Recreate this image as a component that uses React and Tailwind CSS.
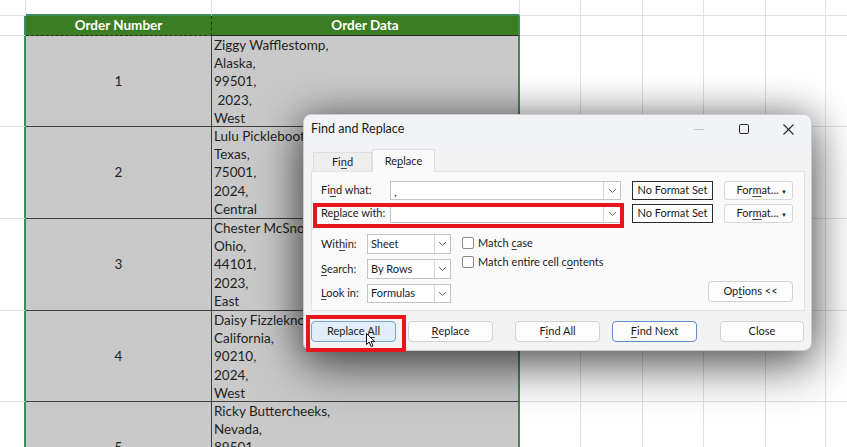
import React from "react";

const GREEN = "border-r-[#3d8c5c]";
const rightCols = ["w-[61px]", "w-[62px]", "w-[61px]", "w-[62px]", "w-[60px]", "w-[62px]"];

function RightCells() {
  return rightCols.map((w, i) => (
    <div key={i} className={`${w} shrink-0 h-full border-r border-b border-[#e1e1e1]`} />
  ));
}

const rows = [
  { n: "1", h: "h-[91px]", lines: ["Ziggy Wafflestomp,", "Alaska,", "99501,", " 2023,", "West"] },
  { n: "2", h: "h-[92px]", lines: ["Lulu Pickleboots,", "Texas,", "75001,", "2024,", "Central"] },
  { n: "3", h: "h-[92px]", lines: ["Chester McSnorkel,", "Ohio,", "44101,", "2023,", "East"] },
  { n: "4", h: "h-[91px]", lines: ["Daisy Fizzleknots,", "California,", "90210,", "2024,", "West"] },
  { n: "5", h: "h-[92px]", lines: ["Ricky Buttercheeks,", "Nevada,", "89501,", "2023,", "West"] },
];

function Chevron() {
  return (
    <svg width="9" height="6" viewBox="0 0 9 6" fill="none">
      <path d="M1 1l3.5 3.5L8 1" stroke="#6b6b6b" strokeWidth="1" />
    </svg>
  );
}

function ComboInput({ w, value }) {
  return (
    <div className={`${w} h-full flex bg-white border border-[#c4c4c4]`}>
      <div className="flex-1 pl-[3px] flex items-end pb-[1px] leading-none text-[12px]">{value}</div>
      <div className="w-[17px] border-l border-[#d6d6d6] flex items-center justify-center">
        <Chevron />
      </div>
    </div>
  );
}

function Select({ value }) {
  return (
    <div className="w-[84px] h-full flex bg-white border border-[#c4c4c4]">
      <div className="flex-1 pl-[3px] flex items-center">{value}</div>
      <div className="w-[16px] border-l border-[#d6d6d6] flex items-center justify-center">
        <Chevron />
      </div>
    </div>
  );
}

function U({ children }) {
  return <span className="underline underline-offset-2 decoration-[#444]">{children}</span>;
}

function Btn({ w, children, kind }) {
  const cls =
    kind === "primary"
      ? "bg-[#e1edf8] border-[#77a6d8]"
      : kind === "focus"
      ? "bg-[#fdfdfd] border-[#5d8fd0]"
      : "bg-[#fdfdfd] border-[#d2d2d2]";
  return (
    <div className={`${w} h-[21px] rounded-[4px] border ${cls} flex items-center justify-center shrink-0 whitespace-pre`}>
      {children}
    </div>
  );
}

function Dialog() {
  return (
    <div className="absolute left-[303px] top-[114px] w-[509px] h-[237px] rounded-[8px] bg-[#f3f3f3] border border-[#cccccc] shadow-[0_0_36px_rgba(0,0,0,0.35),0_16px_50px_rgba(0,0,0,0.55)] flex flex-col text-[11px] text-[#1b1b1b] font-['Lato',sans-serif]">
      {/* title bar */}
      <div className="h-[34px] flex items-center pl-[7px] pb-[6px] rounded-t-[8px] bg-[#f1f3f6]">
        <span className="text-[12.5px] text-[#1a1a1a]">Find and Replace</span>
        <div className="ml-auto flex items-center h-full">
          <div className="w-[45px] flex justify-center">
            <div className="w-[10px] h-px bg-[#c8c8c8]" />
          </div>
          <div className="w-[45px] flex justify-center">
            <div className="w-[10px] h-[10px] border border-[#2b2b2b] rounded-[2px]" />
          </div>
          <div className="w-[45px] flex justify-center">
            <svg width="11" height="11" viewBox="0 0 11 11">
              <path d="M0.5 0.5l10 10M10.5 0.5l-10 10" stroke="#2b2b2b" strokeWidth="1.1" />
            </svg>
          </div>
        </div>
      </div>
      {/* tabs */}
      <div className="h-[22px] flex items-end pl-[9px]">
        <div className="w-[59px] h-[19px] bg-[#eeeeee] border border-b-0 border-[#dedede] flex items-center justify-center">
          Fi<U>n</U>d
        </div>
        <div className="relative z-10 -mb-px w-[63px] h-[23px] bg-[#fafafa] border border-b-0 border-[#dedede] flex items-center justify-center">
          Re<U>p</U>lace
        </div>
      </div>
      {/* panel */}
      <div className="ml-[7px] w-[494px] h-[140px] bg-[#fafafa] border border-[#e2e2e2] pt-[9px] pl-[9px] flex flex-col">
        <div className="h-[19px] flex items-center">
          <div className="w-[69px]">
            Fi<U>n</U>d what:
          </div>
          <ComboInput w="w-[231px]" value="," />
          <div className="ml-[11px] w-[81px] h-full border border-[#2b2b2b] bg-white flex items-center justify-center">
            No Format Set
          </div>
          <div className="ml-[11px] w-[69px] h-full rounded-[3px] border border-[#d8d8d8] bg-[#fdfdfd] flex items-center justify-center relative">
            <span className="pr-[2px]">
              For<U>m</U>at...
            </span>
            <span className="absolute right-[5px] text-[6px] top-[5px]">▼</span>
          </div>
        </div>
        <div className="mt-[4px] h-[19px] flex items-center">
          <div className="w-[69px]">
            Re<U>p</U>lace with:
          </div>
          <ComboInput w="w-[231px]" value="" />
          <div className="ml-[11px] w-[81px] h-full border border-[#2b2b2b] bg-white flex items-center justify-center">
            No Format Set
          </div>
          <div className="ml-[11px] w-[69px] h-full rounded-[3px] border border-[#d8d8d8] bg-[#fdfdfd] flex items-center justify-center relative">
            <span className="pr-[2px]">
              For<U>m</U>at...
            </span>
            <span className="absolute right-[5px] text-[6px] top-[5px]">▼</span>
          </div>
        </div>
        <div className="mt-[11px] flex">
          <div className="flex flex-col gap-[5px]">
            <div className="h-[20px] flex items-center">
              <div className="w-[46px]">
                Wit<U>h</U>in:
              </div>
              <Select value="Sheet" />
            </div>
            <div className="h-[20px] flex items-center">
              <div className="w-[46px]">
                <U>S</U>earch:
              </div>
              <Select value="By Rows" />
            </div>
            <div className="h-[19px] flex items-center">
              <div className="w-[46px]">
                <U>L</U>ook in:
              </div>
              <Select value="Formulas" />
            </div>
          </div>
          <div className="ml-[11px] pt-[3px] flex flex-col gap-[7px]">
            <div className="flex items-center h-[12px]">
              <div className="w-[12px] h-[12px] rounded-[2px] border border-[#8c8c8c] bg-white" />
              <span className="ml-[4px] whitespace-pre">
                {"Match "}<U>c</U>ase
              </span>
            </div>
            <div className="flex items-center h-[12px]">
              <div className="w-[12px] h-[12px] rounded-[2px] border border-[#8c8c8c] bg-white" />
              <span className="ml-[4px] whitespace-pre">
                {"Match entire cell c"}<U>o</U>ntents
              </span>
            </div>
          </div>
          <div className="ml-auto mr-[11px] self-end mb-[1px] w-[85px] h-[21px] rounded-[4px] border border-[#d2d2d2] bg-[#fdfdfd] flex items-center justify-center">
            Op<U>t</U>ions &lt;&lt;
          </div>
        </div>
      </div>
      {/* buttons */}
      <div className="mt-[10px] ml-[7px] flex">
        <Btn w="w-[85px]" kind="primary">
          {"Replace "}<U>A</U>ll
        </Btn>
        <div className="ml-[12px]">
          <Btn w="w-[85px]">
            <U>R</U>eplace
          </Btn>
        </div>
        <div className="ml-[22px]">
          <Btn w="w-[85px]">
            F<U>i</U>{"nd All"}
          </Btn>
        </div>
        <div className="ml-[12px]">
          <Btn w="w-[85px]" kind="focus">
            <U>F</U>{"ind Next"}
          </Btn>
        </div>
        <div className="ml-[23px]">
          <Btn w="w-[84px]">Close</Btn>
        </div>
      </div>
      {/* red highlight boxes */}
      <div className="absolute left-[9px] top-[88px] w-[311px] h-[25px] border-[4px] border-[#e8151c] pointer-events-none" />
      <div className="absolute left-[2px] top-[200px] w-[100px] h-[37px] border-[4px] border-[#e8151c] pointer-events-none" />
      {/* cursor */}
      <svg className="absolute left-[62px] top-[218px]" width="10" height="15" viewBox="0 0 10 15">
        <path d="M0.5 0.5 L0.5 11.5 L3.2 9 L5.2 13.6 L7 12.8 L5.1 8.4 L8.6 8.4 Z" fill="#ffffff" stroke="#111" strokeWidth="1" />
      </svg>
    </div>
  );
}

export default function App() {
  return (
    <div className="relative w-[847px] h-[447px] overflow-hidden bg-white font-['Lato',sans-serif] text-[#1f1f1f]">
      <div className="flex flex-col">
        {/* top row */}
        <div className="h-[16px] flex">
          <div className="w-[26px] shrink-0 h-full border-r border-b border-[#e1e1e1]" />
          <div className="w-[186px] shrink-0 h-full border-r border-r-[#e1e1e1] border-b-2 border-b-[#3d8c5c]" />
          <div className="w-[308px] shrink-0 h-full border-r border-r-[#e1e1e1] border-b-2 border-b-[#3d8c5c]" />
          <RightCells />
        </div>
        {/* header row */}
        <div className="h-[20px] flex">
          <div className={`w-[26px] shrink-0 h-full border-b border-b-[#e1e1e1] border-r-2 ${GREEN}`} />
          <div className="w-[186px] shrink-0 h-full bg-[#3b7d23] border-r border-dashed border-r-[#1c3510] border-b border-b-[#2a2a2a] flex items-center justify-center text-white font-bold text-[13.5px]">
            Order Number
          </div>
          <div className={`w-[308px] shrink-0 h-full bg-[#3b7d23] border-b border-b-[#2a2a2a] border-r-2 ${GREEN} flex items-center justify-center text-white font-bold text-[13.5px]`}>
            Order Data
          </div>
          <RightCells />
        </div>
        {rows.map((r) => (
          <div key={r.n} className={`${r.h} flex`}>
            <div className={`w-[26px] shrink-0 h-full border-b border-b-[#e1e1e1] border-r-2 ${GREEN}`} />
            <div className="w-[186px] shrink-0 h-full bg-[#c9c9c9] border-r border-b border-[#404040] flex items-center justify-center text-[13.5px]">
              {r.n}
            </div>
            <div className={`w-[308px] shrink-0 h-full bg-[#c9c9c9] border-b border-b-[#404040] border-r-2 ${GREEN} pl-[2px] text-[13.5px] leading-[18.2px] overflow-hidden`}>
              {r.lines.map((l, i) => (
                <div key={i} className="whitespace-pre">
                  {l}
                </div>
              ))}
            </div>
            <RightCells />
          </div>
        ))}
      </div>
      <Dialog />
    </div>
  );
}
